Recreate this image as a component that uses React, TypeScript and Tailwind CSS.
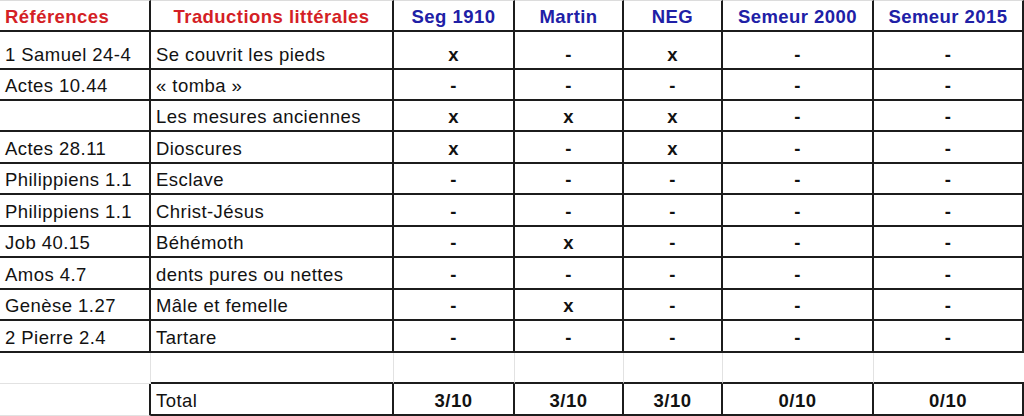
import React from "react";

const rows: string[][] = [
  ["1 Samuel 24-4", "Se couvrit les pieds", "x", "-", "x", "-", "-"],
  ["Actes 10.44", "« tomba »", "-", "-", "-", "-", "-"],
  ["", "Les mesures anciennes", "x", "x", "x", "-", "-"],
  ["Actes 28.11", "Dioscures", "x", "-", "x", "-", "-"],
  ["Philippiens 1.1", "Esclave", "-", "-", "-", "-", "-"],
  ["Philippiens 1.1", "Christ-Jésus", "-", "-", "-", "-", "-"],
  ["Job 40.15", "Béhémoth", "-", "x", "-", "-", "-"],
  ["Amos 4.7", "dents pures ou nettes", "-", "-", "-", "-", "-"],
  ["Genèse 1.27", "Mâle et femelle", "-", "x", "-", "-", "-"],
  ["2 Pierre 2.4", "Tartare", "-", "-", "-", "-", "-"],
];

const heads = ["Seg 1910", "Martin", "NEG", "Semeur 2000", "Semeur 2015"];
const totals = ["3/10", "3/10", "3/10", "0/10", "0/10"];

const cell = "flex items-end pb-[3px] border-r-2 border-b-2 border-[#1c1c1c] overflow-hidden whitespace-nowrap";

export default function App() {
  return (
    <div className="w-[1024px] h-[416px] overflow-hidden bg-white font-['Liberation_Sans',Arial,sans-serif] text-[18.5px] leading-[20px] tracking-[0.45px] text-[#121212]">
      <div className="grid grid-cols-[151px_243px_121px_109px_99px_151px_150px] grid-rows-[32px_38px_31px_31px_32px_31px_32px_31px_32px_31px_32px_31px_32px]">
        {/* header */}
        <div className={`${cell} border-t border-t-[#dcdcdc] pl-[5px] font-bold text-[#d41f26]`}>Références</div>
        <div className={`${cell} border-t border-t-[#dcdcdc] justify-center font-bold text-[#d41f26]`}>Traductions littérales</div>
        {heads.map((h, i) => (
          <div key={h} className={`${cell} border-t border-t-[#dcdcdc] justify-center font-bold text-[#2020a6] ${i === 4 ? "border-r-0" : ""}`}>
            {h}
          </div>
        ))}

        {rows.map((r, ri) => (
          <React.Fragment key={ri}>
            <div className={`${cell} pl-[5px]`}>{r[0]}</div>
            <div className={`${cell} pl-[5px]`}>{r[1]}</div>
            {r.slice(2).map((v, ci) => (
              <div key={ci} className={`${cell} justify-center font-bold ${ci === 4 ? "border-r-0" : ""}`}>
                {v}
              </div>
            ))}
          </React.Fragment>
        ))}

        {/* empty row */}
        <div className="border-r border-b border-[#e2e2e2]" />
        {[0, 1, 2, 3, 4, 5].map((i) => (
          <div key={i} className={`border-b-2 border-b-[#1c1c1c] ${i < 5 ? "border-r border-r-[#e2e2e2]" : ""}`} />
        ))}

        {/* total row */}
        <div className="border-r-2 border-r-[#1c1c1c] border-b border-b-[#e2e2e2]" />
        <div className={`${cell} pl-[5px]`}>Total</div>
        {totals.map((t, i) => (
          <div key={i} className={`${cell} justify-center font-bold ${i === 4 ? "border-r-0" : ""}`}>
            {t}
          </div>
        ))}
      </div>
    </div>
  );
}
